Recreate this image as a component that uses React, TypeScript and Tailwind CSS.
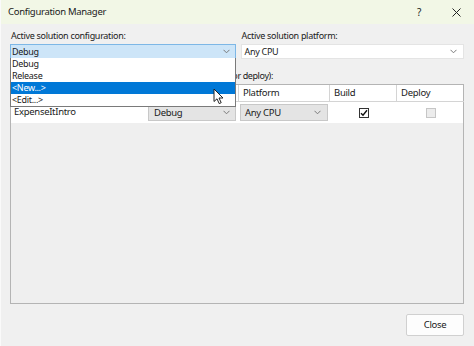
import React from 'react';

const Chevron: React.FC<{ className?: string }> = ({ className }) => (
  <svg width="7" height="5" viewBox="0 0 7 5" className={className}>
    <path d="M0.5 0.8 L3.5 3.8 L6.5 0.8" fill="none" stroke="#7a7a7a" strokeWidth="1" />
  </svg>
);

const Cursor: React.FC = () => (
  <svg width="12" height="17" viewBox="0 0 12 17" className="absolute left-[212px] top-[88px]">
    <path
      d="M1 1 L1 13.5 L4 10.8 L6.2 15.6 L8.2 14.7 L6 10 L10 10 Z"
      fill="#ffffff"
      stroke="#222"
      strokeWidth="1"
      strokeLinejoin="round"
    />
  </svg>
);

const items = ['Debug', 'Release', '<New...>', '<Edit...>'];

export default function App() {
  return (
    <div className="relative w-[474px] h-[346px] bg-[#f0f0f0] flex flex-col overflow-hidden border-l border-[#fafafa] text-[#1a1a1a] font-['Noto_Sans',sans-serif] tracking-[-0.3px]">
      {/* Title bar */}
      <div className="h-[24px] bg-[#f2f7e6] flex items-center pl-[7px] pr-[13px] shrink-0">
        <span className="text-[9.5px] leading-none flex-1">Configuration Manager</span>
        <span className="text-[10px] leading-none w-[10px] text-center mr-[28px]">?</span>
        <svg width="9" height="9" viewBox="0 0 9 9">
          <path d="M0.5 0.5 L8.5 8.5 M8.5 0.5 L0.5 8.5" stroke="#222" strokeWidth="1" />
        </svg>
      </div>

      <div className="flex-1 flex flex-col pl-[9px] pr-[10px] pt-[6px] text-[9px]">
        {/* Active configuration row */}
        <div className="flex gap-[5px]">
          <div className="w-[226px] flex flex-col">
            <span className="leading-[12px] pl-[1px]">Active solution configuration:</span>
            <div className="mt-[2px] h-[15px] bg-[#cde5f8] border border-[#7db7e6] flex items-center pl-[1px] pr-[5px]">
              <span className="flex-1 leading-none">Debug</span>
              <Chevron />
            </div>
          </div>
          <div className="w-[224px] flex flex-col">
            <span className="leading-[12px] pl-[1px]">Active solution platform:</span>
            <div className="mt-[2px] h-[15px] bg-white border border-[#e4e4e4] flex items-center pl-[3px] pr-[6px]">
              <span className="flex-1 leading-none">Any CPU</span>
              <Chevron />
            </div>
          </div>
        </div>

        {/* Project contexts label */}
        <span className="mt-[11px] leading-[12px] pl-[1px] whitespace-nowrap tracking-[-0.4px]">
          Project contexts (check the project configurations to build or deploy):
        </span>

        {/* Grid */}
        <div className="mt-[2px] h-[220px] border border-[#b4b4b4] bg-[#efefef] flex flex-col">
          <div className="grid grid-cols-[137px_91px_91px_67px_67px] h-[17px] bg-white text-[9.5px]">
            <div className="border-r border-b border-[#d4d4d4] pl-[4px] leading-[16px]">Project</div>
            <div className="border-r border-b border-[#d4d4d4] pl-[4px] leading-[16px]">Configuration</div>
            <div className="border-r border-b border-[#d4d4d4] pl-[4px] leading-[16px]">Platform</div>
            <div className="border-r border-b border-[#d4d4d4] pl-[4px] leading-[16px]">Build</div>
            <div className="border-b border-[#d4d4d4] pl-[4px] leading-[16px]">Deploy</div>
          </div>
          <div className="grid grid-cols-[137px_91px_91px_67px_67px] h-[21px] bg-white text-[9.5px]">
            <div className="pl-[3px] flex items-center">ExpenseItIntro</div>
            <div className="py-[2px] pr-[3px]">
              <div className="h-full bg-[#e4e4e4] border border-[#c8c8c8] flex items-center pl-[5px] pr-[5px]">
                <span className="flex-1 leading-none">Debug</span>
                <Chevron />
              </div>
            </div>
            <div className="py-[2px] pl-[1px] pr-[2px]">
              <div className="h-full bg-[#e4e4e4] border border-[#c8c8c8] flex items-center pl-[4px] pr-[6px]">
                <span className="flex-1 leading-none">Any CPU</span>
                <Chevron />
              </div>
            </div>
            <div className="flex items-center justify-center">
              <div className="w-[10px] h-[10px] border border-[#333] bg-white flex items-center justify-center">
                <svg width="8" height="8" viewBox="0 0 8 8">
                  <path d="M1 4.2 L3 6.3 L7 1.2" fill="none" stroke="#111" strokeWidth="1.4" />
                </svg>
              </div>
            </div>
            <div className="flex items-center justify-center">
              <div className="w-[10px] h-[10px] border border-[#c6c6c6] bg-[#ececec]" />
            </div>
          </div>
        </div>

        {/* Footer */}
        <div className="flex justify-end mt-[10px]">
          <button className="w-[58px] h-[22px] bg-[#fdfdfd] border border-[#d0d0d0] rounded-[2px] text-[9.5px] leading-none tracking-[-0.3px]">
            Close
          </button>
        </div>
      </div>

      {/* Open dropdown list */}
      <div className="absolute left-[9px] top-[58px] w-[226px] bg-white border border-[#7a7a7a] border-t-0 text-[9px] flex flex-col">
        {items.map((item) => (
          <div
            key={item}
            className={`h-[12px] leading-[12px] pl-[1px] ${item === '<New...>' ? 'bg-[#0078d7] text-white' : ''}`}
          >
            {item}
          </div>
        ))}
      </div>
      <Cursor />
    </div>
  );
}
